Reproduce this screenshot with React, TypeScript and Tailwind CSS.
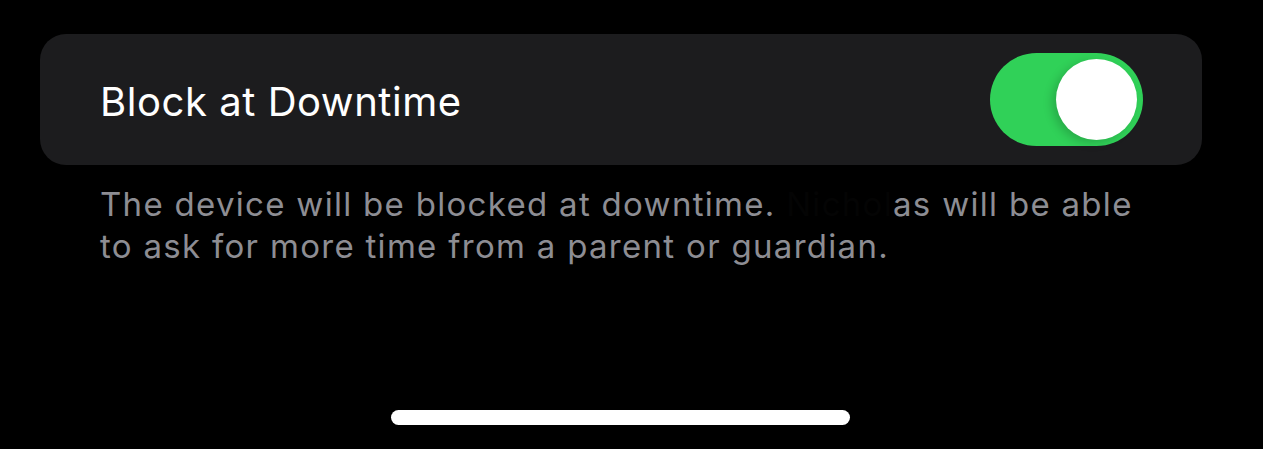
import React from 'react'

function Toggle({ on }: { on: boolean }) {
  return (
    <div
      className={`relative h-[93px] w-[153px] shrink-0 rounded-full ${on ? 'bg-[#30d158]' : 'bg-[#39393d]'}`}
    >
      <div className="absolute right-[6px] top-[6px] h-[81px] w-[81px] rounded-full bg-white shadow-[-4px_3px_10px_rgba(0,0,0,0.18)]" />
    </div>
  )
}

export default function App() {
  return (
    <div
      className="flex h-[449px] w-full flex-col bg-black"
      style={{ fontFamily: 'Inter, "Noto Sans", sans-serif' }}
    >
      {/* Settings row */}
      <div className="ml-[40px] mr-[61px] mt-[34px] flex h-[131px] items-center justify-between rounded-[26px] bg-[#1c1c1e] pl-[60px] pr-[59px]">
        <span className="mt-[4px] text-[40px] tracking-[0.55px] text-white">Block at Downtime</span>
        <Toggle on />
      </div>

      {/* Footer note */}
      <p className="mt-[18px] px-[100px] text-[33px] leading-[42px] tracking-[1.3px] whitespace-nowrap text-[#8d8d93]">
        The device will be blocked at downtime. <span className="text-[#040404]">Nichol</span>as will be able
        <br />
        to ask for more time from a parent or guardian.
      </p>

      {/* Home indicator */}
      <div className="mt-auto mb-[24px] flex justify-center">
        <div className="ml-[-22px] h-[15px] w-[459px] rounded-full bg-white" />
      </div>
    </div>
  )
}
